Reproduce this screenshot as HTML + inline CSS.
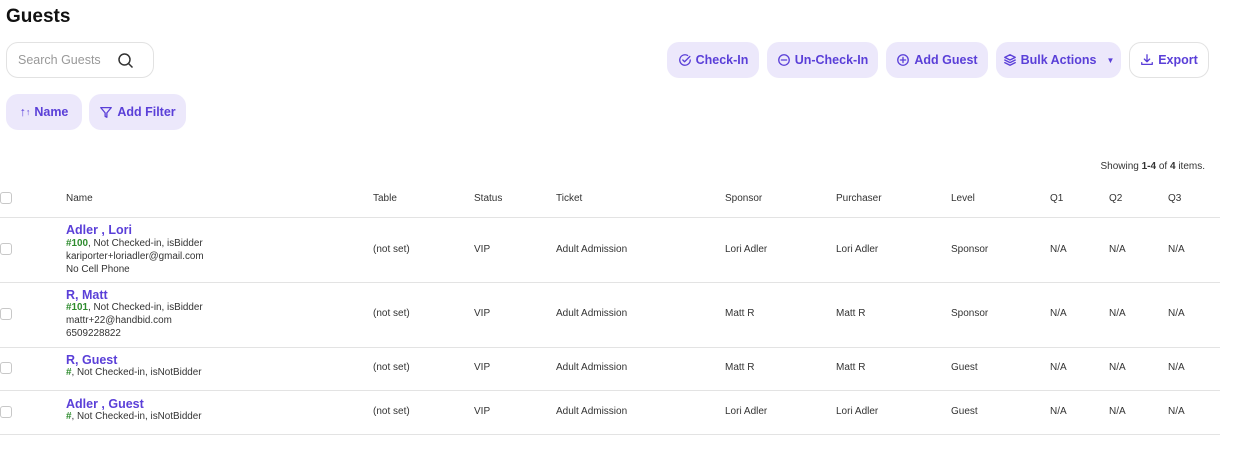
<!DOCTYPE html>
<html><head><meta charset="utf-8"><style>
*{margin:0;padding:0;box-sizing:border-box}
body{width:1246px;height:459px;background:#fff;font-family:"Liberation Sans",sans-serif;color:#222;position:relative;overflow:hidden}
.a{position:absolute}
h1{position:absolute;left:6px;top:6px;font-size:19px;font-weight:700;color:#111}
.btn{position:absolute;height:36px;border-radius:12px;background:#ece8fb;color:#5a3fd8;font-weight:700;font-size:12.5px;display:flex;align-items:center;justify-content:center;gap:4px}
.btn svg{width:14px;height:14px;fill:none;stroke:#5a3fd8;stroke-width:1.5;stroke-linecap:round;stroke-linejoin:round}
.s{font-size:10px;color:#333}
.line{position:absolute;left:0;width:1220px;height:1px;background:#e3e3e3}
.cb{position:absolute;left:0;width:12px;height:12px;border:1px solid #c8c8c8;border-radius:3px}
.nm{position:absolute;left:66px;font-size:12.5px;font-weight:700;color:#5a3fd8}
.sub{position:absolute;left:66px;font-size:9.9px;color:#333;line-height:13px}
.g{color:#2e8b2e;font-weight:700}
</style></head><body>
<h1>Guests</h1>
<div class="a" style="left:6px;top:42px;width:148px;height:36px;border:1px solid #e2e2e2;border-radius:12px"></div>
<div class="a" style="left:18px;top:53px;font-size:12.5px;color:#999">Search Guests</div>
<svg class="a" style="left:117px;top:52px" width="17" height="17" viewBox="0 0 17 17" fill="none" stroke="#333" stroke-width="1.5"><circle cx="7.5" cy="7.5" r="5.5"/><path d="M11.5 11.5l4 4"/></svg>

<div class="btn" style="left:667px;top:42px;width:92px"><svg viewBox="0 0 16 16"><path d="M14 8a6 6 0 1 1-3-5.2"/><path d="M5.5 8l2 2 6-6"/></svg>Check-In</div>
<div class="btn" style="left:767px;top:42px;width:111px"><svg viewBox="0 0 16 16"><circle cx="8" cy="8" r="6"/><path d="M5 8h6"/></svg>Un-Check-In</div>
<div class="btn" style="left:886px;top:42px;width:102px"><svg viewBox="0 0 16 16"><circle cx="8" cy="8" r="6"/><path d="M5 8h6M8 5v6"/></svg>Add Guest</div>
<div class="btn" style="left:996px;top:42px;width:125px"><svg viewBox="0 0 16 16"><path d="M8 2l6 3-6 3-6-3z"/><path d="M2 8l6 3 6-3"/><path d="M2 11l6 3 6-3"/></svg>Bulk Actions <span style="font-size:8px;margin-left:6px">▼</span></div>
<div class="btn" style="left:1129px;top:42px;width:80px;background:#fff;border:1px solid #e2e2e2"><svg viewBox="0 0 16 16"><path d="M8 2v8M5 7l3 3 3-3M2 11v2h12v-2"/></svg>Export</div>

<div class="btn" style="left:6px;top:94px;width:76px">↑<span style="font-size:9px;margin-left:-4px">↑</span> Name</div>
<div class="btn" style="left:89px;top:94px;width:97px"><svg viewBox="0 0 16 16"><path d="M2 3h12l-5 6v5l-2-1V9z"/></svg>Add Filter</div>

<div class="a s" style="right:41px;top:161px">Showing <b>1-4</b> of <b>4</b> items.</div>

<div class="cb" style="top:192px"></div>
<div class="a s" style="left:66px;top:193px">Name</div>
<div class="a s" style="left:373px;top:193px">Table</div>
<div class="a s" style="left:474px;top:193px">Status</div>
<div class="a s" style="left:556px;top:193px">Ticket</div>
<div class="a s" style="left:725px;top:193px">Sponsor</div>
<div class="a s" style="left:836px;top:193px">Purchaser</div>
<div class="a s" style="left:951px;top:193px">Level</div>
<div class="a s" style="left:1050px;top:193px">Q1</div>
<div class="a s" style="left:1109px;top:193px">Q2</div>
<div class="a s" style="left:1168px;top:193px">Q3</div>
<div class="line" style="top:217px"></div>

<div class="cb" style="top:243px"></div>
<div class="nm" style="top:223px">Adler , Lori</div>
<div class="sub" style="top:237px"><span class="g">#100</span>, Not Checked-in, isBidder<br>kariporter+loriadler@gmail.com<br>No Cell Phone</div>
<div class="line" style="top:282px"></div>
<div class="cb" style="top:308px"></div>
<div class="nm" style="top:288px">R, Matt</div>
<div class="sub" style="top:301px"><span class="g">#101</span>, Not Checked-in, isBidder<br>mattr+22@handbid.com<br>6509228822</div>
<div class="line" style="top:347px"></div>
<div class="cb" style="top:362px"></div>
<div class="nm" style="top:353px">R, Guest</div>
<div class="sub" style="top:366px"><span class="g">#</span>, Not Checked-in, isNotBidder</div>
<div class="line" style="top:390px"></div>
<div class="cb" style="top:406px"></div>
<div class="nm" style="top:397px">Adler , Guest</div>
<div class="sub" style="top:410px"><span class="g">#</span>, Not Checked-in, isNotBidder</div>
<div class="line" style="top:434px"></div>

<div class="a s" style="left:373px;top:244px">(not set)</div><div class="a s" style="left:474px;top:244px">VIP</div><div class="a s" style="left:556px;top:244px">Adult Admission</div><div class="a s" style="left:725px;top:244px">Lori Adler</div><div class="a s" style="left:836px;top:244px">Lori Adler</div><div class="a s" style="left:951px;top:244px">Sponsor</div><div class="a s" style="left:1050px;top:244px">N/A</div><div class="a s" style="left:1109px;top:244px">N/A</div><div class="a s" style="left:1168px;top:244px">N/A</div>
<div class="a s" style="left:373px;top:308px">(not set)</div><div class="a s" style="left:474px;top:308px">VIP</div><div class="a s" style="left:556px;top:308px">Adult Admission</div><div class="a s" style="left:725px;top:308px">Matt R</div><div class="a s" style="left:836px;top:308px">Matt R</div><div class="a s" style="left:951px;top:308px">Sponsor</div><div class="a s" style="left:1050px;top:308px">N/A</div><div class="a s" style="left:1109px;top:308px">N/A</div><div class="a s" style="left:1168px;top:308px">N/A</div>
<div class="a s" style="left:373px;top:362px">(not set)</div><div class="a s" style="left:474px;top:362px">VIP</div><div class="a s" style="left:556px;top:362px">Adult Admission</div><div class="a s" style="left:725px;top:362px">Matt R</div><div class="a s" style="left:836px;top:362px">Matt R</div><div class="a s" style="left:951px;top:362px">Guest</div><div class="a s" style="left:1050px;top:362px">N/A</div><div class="a s" style="left:1109px;top:362px">N/A</div><div class="a s" style="left:1168px;top:362px">N/A</div>
<div class="a s" style="left:373px;top:406px">(not set)</div><div class="a s" style="left:474px;top:406px">VIP</div><div class="a s" style="left:556px;top:406px">Adult Admission</div><div class="a s" style="left:725px;top:406px">Lori Adler</div><div class="a s" style="left:836px;top:406px">Lori Adler</div><div class="a s" style="left:951px;top:406px">Guest</div><div class="a s" style="left:1050px;top:406px">N/A</div><div class="a s" style="left:1109px;top:406px">N/A</div><div class="a s" style="left:1168px;top:406px">N/A</div>
</body></html>
